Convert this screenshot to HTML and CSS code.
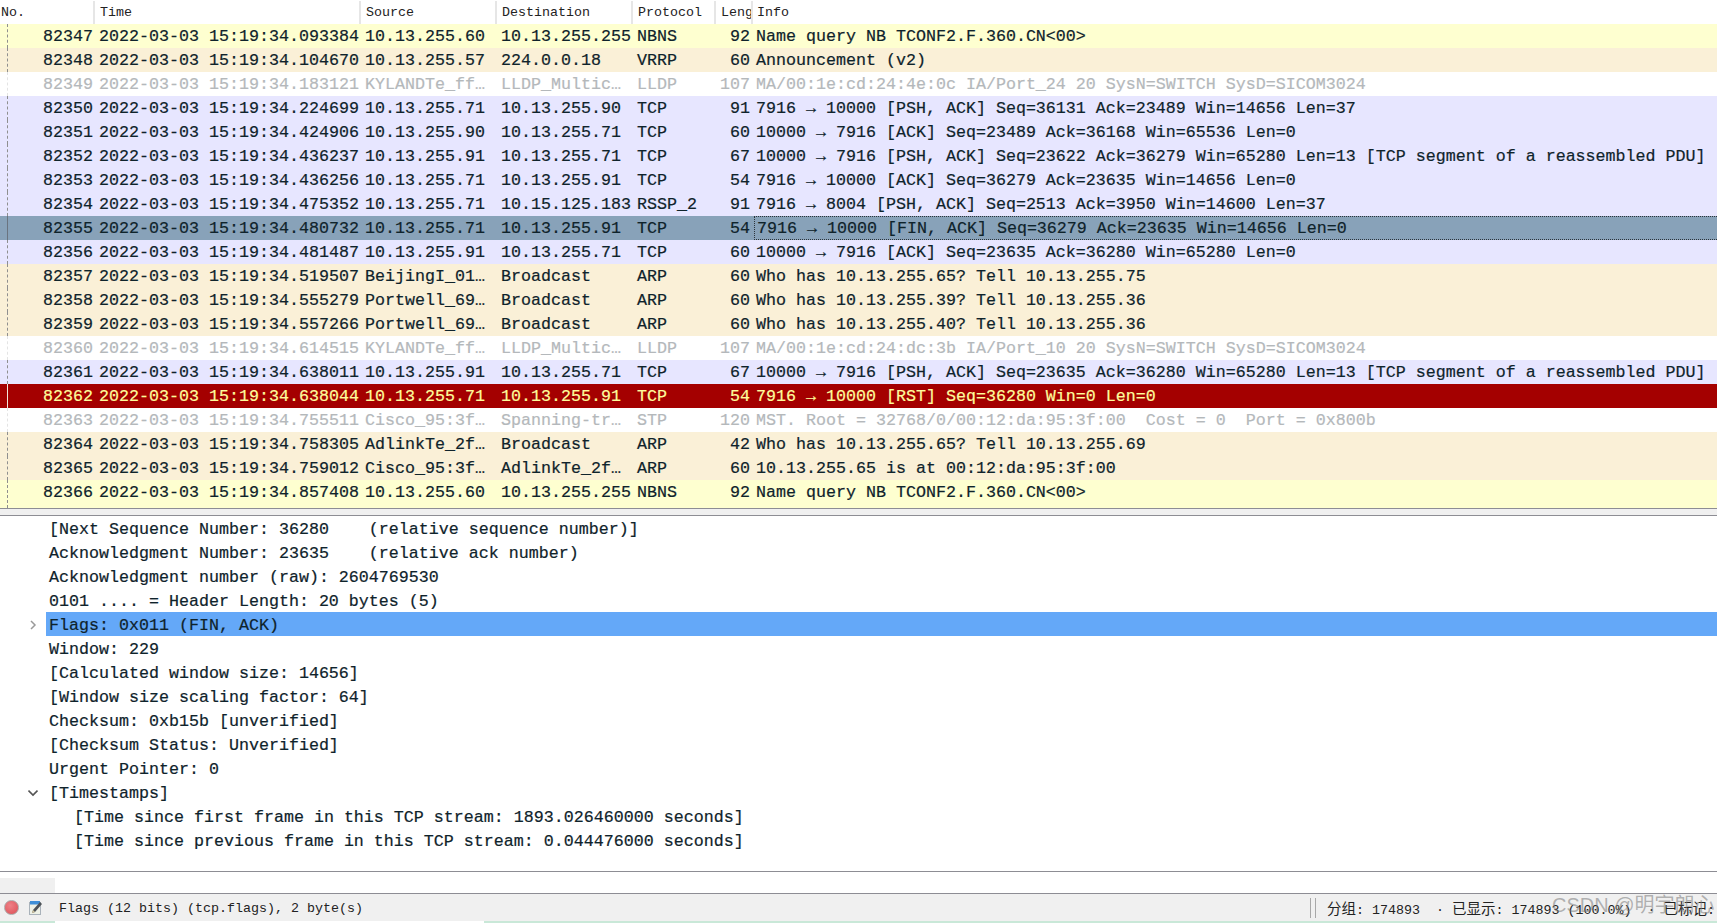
FILE: index.html
```html
<!DOCTYPE html>
<html lang="zh-CN">
<head>
    <meta charset="UTF-8">
    <title>Wireshark</title>
    <link rel="stylesheet" href="styles.css">
</head>
<body>
    <!-- Packet list -->
    <div class="packet-list">
        <div class="row head">
            <div class="c-no">No.</div>
            <div class="c-time">Time</div>
            <div class="c-src">Source</div>
            <div class="c-dst">Destination</div>
            <div class="c-proto">Protocol</div>
            <div class="c-len">Length</div>
            <div class="c-info">Info</div>
        </div>
        <div class="row yellow"><div class="c-no">82347</div><div class="c-time">2022-03-03 15:19:34.093384</div><div class="c-src">10.13.255.60</div><div class="c-dst">10.13.255.255</div><div class="c-proto">NBNS</div><div class="c-len">92</div><div class="c-info">Name query NB TCONF2.F.360.CN&lt;00&gt;</div></div>
        <div class="row orange"><div class="c-no">82348</div><div class="c-time">2022-03-03 15:19:34.104670</div><div class="c-src">10.13.255.57</div><div class="c-dst">224.0.0.18</div><div class="c-proto">VRRP</div><div class="c-len">60</div><div class="c-info">Announcement (v2)</div></div>
        <div class="row muted"><div class="c-no">82349</div><div class="c-time">2022-03-03 15:19:34.183121</div><div class="c-src">KYLANDTe_ff…</div><div class="c-dst">LLDP_Multic…</div><div class="c-proto">LLDP</div><div class="c-len">107</div><div class="c-info">MA/00:1e:cd:24:4e:0c IA/Port_24 20 SysN=SWITCH SysD=SICOM3024</div></div>
        <div class="row tcp"><div class="c-no">82350</div><div class="c-time">2022-03-03 15:19:34.224699</div><div class="c-src">10.13.255.71</div><div class="c-dst">10.13.255.90</div><div class="c-proto">TCP</div><div class="c-len">91</div><div class="c-info">7916 → 10000 [PSH, ACK] Seq=36131 Ack=23489 Win=14656 Len=37</div></div>
        <div class="row tcp"><div class="c-no">82351</div><div class="c-time">2022-03-03 15:19:34.424906</div><div class="c-src">10.13.255.90</div><div class="c-dst">10.13.255.71</div><div class="c-proto">TCP</div><div class="c-len">60</div><div class="c-info">10000 → 7916 [ACK] Seq=23489 Ack=36168 Win=65536 Len=0</div></div>
        <div class="row tcp"><div class="c-no">82352</div><div class="c-time">2022-03-03 15:19:34.436237</div><div class="c-src">10.13.255.91</div><div class="c-dst">10.13.255.71</div><div class="c-proto">TCP</div><div class="c-len">67</div><div class="c-info">10000 → 7916 [PSH, ACK] Seq=23622 Ack=36279 Win=65280 Len=13 [TCP segment of a reassembled PDU]</div></div>
        <div class="row tcp"><div class="c-no">82353</div><div class="c-time">2022-03-03 15:19:34.436256</div><div class="c-src">10.13.255.71</div><div class="c-dst">10.13.255.91</div><div class="c-proto">TCP</div><div class="c-len">54</div><div class="c-info">7916 → 10000 [ACK] Seq=36279 Ack=23635 Win=14656 Len=0</div></div>
        <div class="row tcp"><div class="c-no">82354</div><div class="c-time">2022-03-03 15:19:34.475352</div><div class="c-src">10.13.255.71</div><div class="c-dst">10.15.125.183</div><div class="c-proto">RSSP_2</div><div class="c-len">91</div><div class="c-info">7916 → 8004 [PSH, ACK] Seq=2513 Ack=3950 Win=14600 Len=37</div></div>
        <div class="row selected"><div class="c-no">82355</div><div class="c-time">2022-03-03 15:19:34.480732</div><div class="c-src">10.13.255.71</div><div class="c-dst">10.13.255.91</div><div class="c-proto">TCP</div><div class="c-len">54</div><div class="c-info">7916 → 10000 [FIN, ACK] Seq=36279 Ack=23635 Win=14656 Len=0</div></div>
        <div class="row tcp"><div class="c-no">82356</div><div class="c-time">2022-03-03 15:19:34.481487</div><div class="c-src">10.13.255.91</div><div class="c-dst">10.13.255.71</div><div class="c-proto">TCP</div><div class="c-len">60</div><div class="c-info">10000 → 7916 [ACK] Seq=23635 Ack=36280 Win=65280 Len=0</div></div>
        <div class="row orange"><div class="c-no">82357</div><div class="c-time">2022-03-03 15:19:34.519507</div><div class="c-src">BeijingI_01…</div><div class="c-dst">Broadcast</div><div class="c-proto">ARP</div><div class="c-len">60</div><div class="c-info">Who has 10.13.255.65? Tell 10.13.255.75</div></div>
        <div class="row orange"><div class="c-no">82358</div><div class="c-time">2022-03-03 15:19:34.555279</div><div class="c-src">Portwell_69…</div><div class="c-dst">Broadcast</div><div class="c-proto">ARP</div><div class="c-len">60</div><div class="c-info">Who has 10.13.255.39? Tell 10.13.255.36</div></div>
        <div class="row orange"><div class="c-no">82359</div><div class="c-time">2022-03-03 15:19:34.557266</div><div class="c-src">Portwell_69…</div><div class="c-dst">Broadcast</div><div class="c-proto">ARP</div><div class="c-len">60</div><div class="c-info">Who has 10.13.255.40? Tell 10.13.255.36</div></div>
        <div class="row muted"><div class="c-no">82360</div><div class="c-time">2022-03-03 15:19:34.614515</div><div class="c-src">KYLANDTe_ff…</div><div class="c-dst">LLDP_Multic…</div><div class="c-proto">LLDP</div><div class="c-len">107</div><div class="c-info">MA/00:1e:cd:24:dc:3b IA/Port_10 20 SysN=SWITCH SysD=SICOM3024</div></div>
        <div class="row tcp"><div class="c-no">82361</div><div class="c-time">2022-03-03 15:19:34.638011</div><div class="c-src">10.13.255.91</div><div class="c-dst">10.13.255.71</div><div class="c-proto">TCP</div><div class="c-len">67</div><div class="c-info">10000 → 7916 [PSH, ACK] Seq=23635 Ack=36280 Win=65280 Len=13 [TCP segment of a reassembled PDU]</div></div>
        <div class="row red"><div class="c-no">82362</div><div class="c-time">2022-03-03 15:19:34.638044</div><div class="c-src">10.13.255.71</div><div class="c-dst">10.13.255.91</div><div class="c-proto">TCP</div><div class="c-len">54</div><div class="c-info">7916 → 10000 [RST] Seq=36280 Win=0 Len=0</div></div>
        <div class="row muted"><div class="c-no">82363</div><div class="c-time">2022-03-03 15:19:34.755511</div><div class="c-src">Cisco_95:3f…</div><div class="c-dst">Spanning-tr…</div><div class="c-proto">STP</div><div class="c-len">120</div><div class="c-info">MST. Root = 32768/0/00:12:da:95:3f:00  Cost = 0  Port = 0x800b</div></div>
        <div class="row orange"><div class="c-no">82364</div><div class="c-time">2022-03-03 15:19:34.758305</div><div class="c-src">AdlinkTe_2f…</div><div class="c-dst">Broadcast</div><div class="c-proto">ARP</div><div class="c-len">42</div><div class="c-info">Who has 10.13.255.65? Tell 10.13.255.69</div></div>
        <div class="row orange"><div class="c-no">82365</div><div class="c-time">2022-03-03 15:19:34.759012</div><div class="c-src">Cisco_95:3f…</div><div class="c-dst">AdlinkTe_2f…</div><div class="c-proto">ARP</div><div class="c-len">60</div><div class="c-info">10.13.255.65 is at 00:12:da:95:3f:00</div></div>
        <div class="row yellow last"><div class="c-no">82366</div><div class="c-time">2022-03-03 15:19:34.857408</div><div class="c-src">10.13.255.60</div><div class="c-dst">10.13.255.255</div><div class="c-proto">NBNS</div><div class="c-len">92</div><div class="c-info">Name query NB TCONF2.F.360.CN&lt;00&gt;</div></div>
    </div>

    <div class="splitter"></div>

    <!-- Packet details -->
    <div class="details">
        <div class="line">[Next Sequence Number: 36280    (relative sequence number)]</div>
        <div class="line">Acknowledgment Number: 23635    (relative ack number)</div>
        <div class="line">Acknowledgment number (raw): 2604769530</div>
        <div class="line">0101 .... = Header Length: 20 bytes (5)</div>
        <div class="line current"><svg class="arrow" width="10" height="10" viewBox="0 0 10 10"><path d="M3 1l4 4-4 4" fill="none" stroke="#9a9a9a" stroke-width="1.5"/></svg><span class="current-text">Flags: 0x011 (FIN, ACK)</span></div>
        <div class="line">Window: 229</div>
        <div class="line">[Calculated window size: 14656]</div>
        <div class="line">[Window size scaling factor: 64]</div>
        <div class="line">Checksum: 0xb15b [unverified]</div>
        <div class="line">[Checksum Status: Unverified]</div>
        <div class="line">Urgent Pointer: 0</div>
        <div class="line"><svg class="arrow" width="10" height="10" viewBox="0 0 10 10"><path d="M0.5 2.5l4.5 4.5 4.5-4.5" fill="none" stroke="#555" stroke-width="1.6"/></svg>[Timestamps]</div>
        <div class="line sub">[Time since first frame in this TCP stream: 1893.026460000 seconds]</div>
        <div class="line sub">[Time since previous frame in this TCP stream: 0.044476000 seconds]</div>
    </div>

    <div class="hscroll"><div class="hscroll-btn"></div></div>

    <!-- Status bar -->
    <div class="status">
        <span class="led"></span>
        <svg class="note" width="16" height="16" viewBox="0 0 16 16">
            <rect x="1.5" y="2.5" width="11" height="12" fill="#eef1e6" stroke="#a9b2ba"/>
            <rect x="2" y="1" width="10" height="3.5" fill="#3f8fd8"/>
            <path d="M4 13l1-3 7-8 2 2-7 8z" fill="#4d5257"/>
            <path d="M4 13l1-3 2 2z" fill="#d8c9a0"/>
        </svg>
        <span class="status-msg">Flags (12 bits) (tcp.flags), 2 byte(s)</span>
        <span class="status-sep"></span>
        <span class="status-stats"><span class="cjk">分组</span>: 174893  · <span class="cjk">已显示</span>: 174893 (100.0%)  · <span class="cjk">已标记</span>:</span>
        <span class="watermark">CSDN @明宇朗心</span>
    </div>
    <div class="desktop-strip"><div class="strip-white"></div></div>
</body>
</html>
```

FILE: styles.css
```css
* {
    margin: 0;
    padding: 0;
    box-sizing: border-box;
}

body {
    width: 1717px;
    height: 923px;
    overflow: hidden;
    background-color: #fff;
    font-family: "Liberation Mono", monospace;
    font-size: 16.67px;
    color: #0f232b;
    -webkit-text-stroke: 0.2px;
}

/* Packet list */
.row {
    display: grid;
    grid-template-columns: 95px 266px 136px 136px 83px 37px 1fr;
    height: 24px;
    line-height: 25px;
    white-space: pre;
}

.row > div {
    overflow: hidden;
    padding-left: 4px;
}

.row .c-no {
    margin-left: 7px;
    padding-left: 0;
    border-left: 1px dashed #8f8f8f;
    padding-right: 2px;
    text-align: right;
}

.row .c-len {
    text-align: right;
    padding-left: 0;
    padding-right: 3px;
}

.row .c-info {
    padding-left: 3px;
}

.row.head {
    padding-top: 1px;
    font-size: 13.33px;
    line-height: 24px;
    color: #222;
    background-color: #fff;
    -webkit-text-stroke: 0;
}

.row.head > div {
    border-right: 2px solid #e6e6e6;
    padding-left: 5px;
}

.row.head .c-no {
    margin-left: 0;
    padding-left: 1px;
    border-left: none;
    text-align: left;
}

.row.head .c-len {
    text-align: left;
    padding-right: 0;
}

.row.head .c-info {
    border-right: none;
    padding-left: 4px;
}

.yellow { background-color: #feffd0; }
.orange { background-color: #faf0d7; }
.tcp { background-color: #e7e6ff; }
.muted { background-color: #fff; color: #b4b8bb; }
.row.muted .c-no { border-left-color: #e4e4e4; }
.red { background-color: #a40000; color: #fffc9c; }
.row.red .c-no { border-left: 1px solid #f3e3d8; }
.selected { background-color: #88a2b9; }
.row.selected .c-no { border-left: 1px solid #6a7480; }
.row.selected .c-info {
    margin-left: 1px;
    padding-left: 2px;
    border: 1px dotted #2b333b;
    border-right: none;
    line-height: 23px;
}
.row.last { height: 28px; }

/* Divider between panes */
.splitter {
    height: 8px;
    background-color: #f0f0f0;
    border-top: 1px solid #8d8d94;
    border-bottom: 1px solid #8d8d94;
}

/* Packet details */
.details {
    height: 355px;
}

.line {
    position: relative;
    height: 24px;
    line-height: 28px;
    padding-left: 49px;
    white-space: pre;
}

.line.sub { padding-left: 74px; }

.line.current { padding-left: 46px; }

.current-text {
    display: block;
    height: 24px;
    padding-left: 3px;
    background-color: #64a8f8;
}

.arrow {
    position: absolute;
    left: 28px;
    top: 8px;
}

/* Horizontal scrollbar */
.hscroll {
    height: 23px;
    background-color: #fff;
    border-top: 1px solid #8d8d94;
    border-bottom: 1px solid #8d8d94;
    padding-top: 6px;
}

.hscroll-btn {
    width: 55px;
    height: 15px;
    background-color: #f0f0f0;
}

/* Status bar */
.status {
    position: relative;
    display: flex;
    align-items: center;
    height: 27px;
    background-color: #f0f0f0;
    font-size: 13.33px;
    color: #222;
    -webkit-text-stroke: 0;
}

.led {
    width: 15px;
    height: 15px;
    margin-left: 4px;
    border-radius: 50%;
    border: 1px solid #a9a9a9;
    background: radial-gradient(circle at 40% 35%, #ee8086, #dc4f55);
}

.note { margin-left: 9px; }

.status-msg {
    margin-left: 15px;
    margin-top: 2px;
}

.status-sep {
    width: 6px;
    height: 20px;
    margin-left: 947px;
    border-left: 1px solid #a8a8a8;
    border-right: 1px solid #a8a8a8;
}

.status-stats {
    margin-left: 11px;
    white-space: pre;
    font-family: "Liberation Mono", "Noto Sans CJK SC", monospace;
}

.cjk { font-size: 14.5px; }

.watermark {
    position: absolute;
    left: 1552px;
    top: -5px;
    font-family: "Liberation Sans", "Noto Sans CJK SC", sans-serif;
    font-size: 20px;
    color: rgba(120, 120, 120, 0.55);
    white-space: nowrap;
}

.desktop-strip {
    height: 3px;
    background-color: #c9e8d8;
    padding-left: 55px;
}

.strip-white {
    width: 429px;
    height: 3px;
    background-color: #fff;
}
```
